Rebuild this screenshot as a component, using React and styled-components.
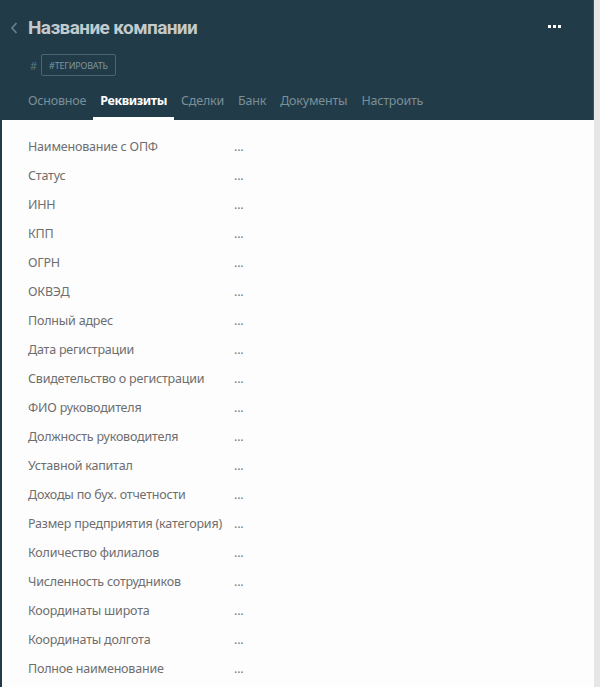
import styled, { createGlobalStyle } from "styled-components";

const GlobalStyle = createGlobalStyle`
  html, body {
    margin: 0;
    padding: 0;
    background: #ffffff;
  }
  body {
    font-family: "Noto Sans", "Open Sans", sans-serif;
  }
`;

const Page = styled.div`
  display: flex;
  width: 600px;
  height: 687px;
  overflow: hidden;
`;

const Panel = styled.div`
  flex: 1;
  border-left: 2px solid #213c48;
  background: #fdfdfe;
  display: flex;
  flex-direction: column;
`;

const Scrollbar = styled.div`
  width: 6px;
  background: #e6e6e6;
`;

const Header = styled.header`
  background: #213c48;
  padding: 0 0 0 8px;
  border-right: 1px solid #3b5662;
`;

const TitleRow = styled.div`
  display: flex;
  align-items: center;
  height: 54px;
  padding-right: 32px;
`;

const Back = styled.span`
  width: 18px;
  display: flex;
  align-items: center;
  justify-content: flex-start;
  margin-top: 2px;
`;

const Title = styled.h1`
  flex: 1;
  margin: 0;
  font-family: Roboto, "Noto Sans", sans-serif;
  font-size: 19px;
  font-weight: 700;
  color: #c3cacd;
  letter-spacing: -0.6px;
`;

const More = styled.span`
  display: flex;
  gap: 2px;
  margin-top: -2px;
`;

const Dot = styled.i`
  width: 3px;
  height: 3px;
  background: #ffffff;
`;

const TagRow = styled.div`
  display: flex;
  align-items: center;
  gap: 4px;
  padding-left: 20px;
  height: 22px;
`;

const Hash = styled.span`
  font-size: 11px;
  color: #5d7580;
`;

const TagButton = styled.span`
  border: 1px solid #4b6571;
  border-radius: 2px;
  color: #7f949d;
  font-size: 9px;
  padding: 0 7px;
  height: 20px;
  display: flex;
  align-items: center;
  letter-spacing: -0.2px;
`;

const Tabs = styled.nav`
  display: flex;
  margin-top: 16px;
  padding-left: 11px;
`;

const Tab = styled.span`
  font-size: 12.5px;
  padding: 0 7px 8px;
  color: ${(p) => (p.active ? "#ffffff" : "#7a8f98")};
  font-weight: ${(p) => (p.active ? 700 : 400)};
  border-bottom: 3px solid ${(p) => (p.active ? "#ffffff" : "transparent")};
  letter-spacing: ${(p) => (p.active ? "-0.4px" : "-0.2px")};
`;

const List = styled.div`
  padding: 12px 0 0 26px;
  display: flex;
  flex-direction: column;
`;

const Row = styled.div`
  display: grid;
  grid-template-columns: 206px 1fr;
  height: 29px;
  align-items: center;
  font-size: 12.5px;
  letter-spacing: -0.2px;
`;

const Label = styled.span`
  color: #6e6e6e;
`;

const Value = styled.span`
  color: #777777;
`;

const fields = [
  "Наименование с ОПФ",
  "Статус",
  "ИНН",
  "КПП",
  "ОГРН",
  "ОКВЭД",
  "Полный адрес",
  "Дата регистрации",
  "Свидетельство о регистрации",
  "ФИО руководителя",
  "Должность руководителя",
  "Уставной капитал",
  "Доходы по бух. отчетности",
  "Размер предприятия (категория)",
  "Количество филиалов",
  "Численность сотрудников",
  "Координаты широта",
  "Координаты долгота",
  "Полное наименование",
];

const tabs = ["Основное", "Реквизиты", "Сделки", "Банк", "Документы", "Настроить"];

export default function App() {
  return (
    <Page>
      <GlobalStyle />
      <Panel>
        <Header>
          <TitleRow>
            <Back>
              <svg width="8" height="12" viewBox="0 0 8 12">
                <path d="M6.5 1 L2 6 L6.5 11" fill="none" stroke="#6c838d" strokeWidth="1.6" />
              </svg>
            </Back>
            <Title>Название компании</Title>
            <More>
              <Dot />
              <Dot />
              <Dot />
            </More>
          </TitleRow>
          <TagRow>
            <Hash>#</Hash>
            <TagButton>#ТЕГИРОВАТЬ</TagButton>
          </TagRow>
          <Tabs>
            {tabs.map((t) => (
              <Tab key={t} active={t === "Реквизиты"}>
                {t}
              </Tab>
            ))}
          </Tabs>
        </Header>
        <List>
          {fields.map((f) => (
            <Row key={f}>
              <Label>{f}</Label>
              <Value>...</Value>
            </Row>
          ))}
        </List>
      </Panel>
      <Scrollbar />
    </Page>
  );
}
